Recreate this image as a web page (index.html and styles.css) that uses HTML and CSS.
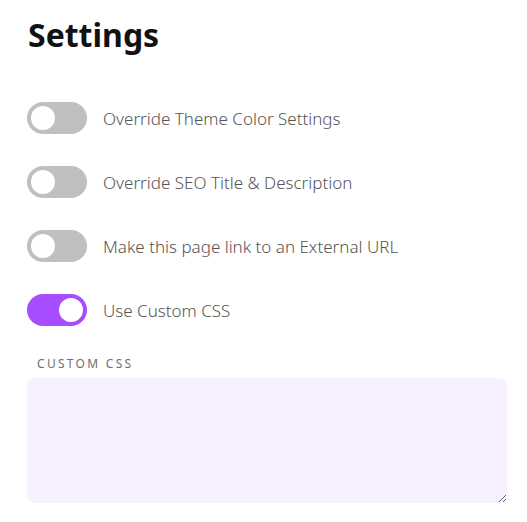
FILE: index.html
```html
<!DOCTYPE html>
<html>
<head>
<meta charset="utf-8">
<link rel="stylesheet" href="styles.css">
</head>
<body>
<div class="page">
  <h1 class="title">Settings</h1>
  <div class="options">
    <label class="option"><span class="toggle"><span class="knob"></span></span><span class="label">Override Theme Color Settings</span></label>
    <label class="option"><span class="toggle"><span class="knob"></span></span><span class="label">Override SEO Title &amp; Description</span></label>
    <label class="option"><span class="toggle"><span class="knob"></span></span><span class="label">Make this page link to an External URL</span></label>
    <label class="option"><span class="toggle on"><span class="knob"></span></span><span class="label">Use Custom CSS</span></label>
  </div>
  <div class="field">
    <div class="field-label">CUSTOM CSS</div>
    <textarea class="css-input"></textarea>
  </div>
</div>
</body>
</html>
```
FILE: styles.css
```css
html, body {
  margin: 0;
  padding: 0;
  background: #ffffff;
}
body {
  font-family: "Noto Sans", "Open Sans", sans-serif;
}
.page {
  padding: 14px 20px 0 27px;
}
.title {
  margin: 0;
  font-size: 32px;
  font-weight: 700;
  color: #111111;
  line-height: 42px;
  padding-left: 1px;
}
.options {
  display: flex;
  flex-direction: column;
  gap: 32px;
  margin-top: 46px;
}
.option {
  display: flex;
  align-items: center;
  gap: 16px;
  height: 32px;
}
.toggle {
  width: 60px;
  height: 32px;
  border-radius: 16px;
  background: #bfbfbf;
  display: flex;
  align-items: center;
  padding: 0 4px;
  box-sizing: border-box;
  flex-shrink: 0;
}
.toggle.on {
  background: #a64dff;
  justify-content: flex-end;
}
.knob {
  width: 24px;
  height: 24px;
  border-radius: 50%;
  background: #ffffff;
}
.label {
  font-size: 17px;
  font-weight: 300;
  color: #555555;
}
.field {
  margin-top: 30px;
}
.field-label {
  font-size: 12px;
  letter-spacing: 2.3px;
  color: #6f6f6f;
  padding-left: 10px;
  line-height: 16px;
  margin-bottom: 6px;
}
.css-input {
  display: block;
  width: 480px;
  height: 125px;
  box-sizing: border-box;
  border: none;
  border-radius: 8px;
  background: #f7f0fe;
  margin: 0;
  padding: 10px;
  resize: both;
  outline: none;
}
```
